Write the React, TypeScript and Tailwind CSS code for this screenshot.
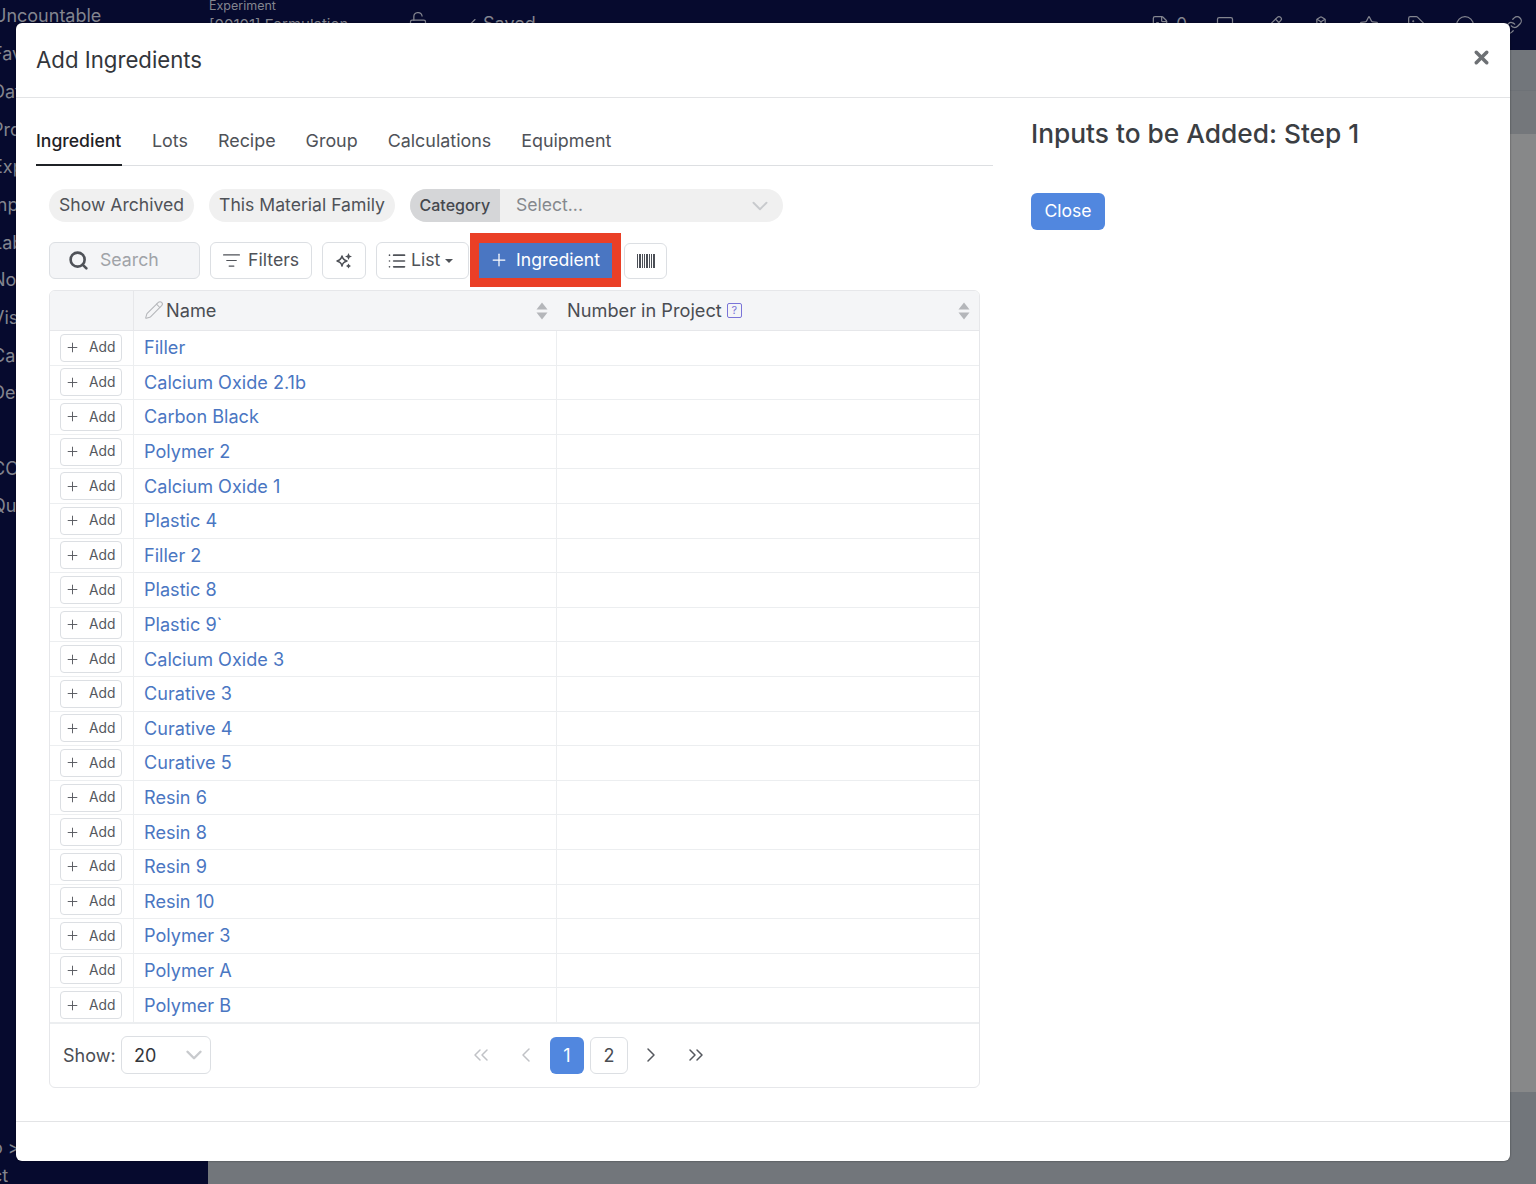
import { Boxes, Check, ChevronDown, ChevronLeft, ChevronRight, ChevronsLeft, ChevronsRight, Circle, FileText, Link, List, ListFilter, LockOpen, Pencil, Plus, Search, Square, Star, Tag, X } from 'lucide-react'

const sans = "font-['Inter',sans-serif]"

const sideItems = ['Fav', 'Dat', 'Pro', 'Exp', 'Inp', 'Lab', 'Not', 'Vis', 'Cal', 'Dev', '', 'CO', 'Qu']

const rows = [
  'Filler', 'Calcium Oxide 2.1b', 'Carbon Black', 'Polymer 2', 'Calcium Oxide 1', 'Plastic 4', 'Filler 2',
  'Plastic 8', 'Plastic 9`', 'Calcium Oxide 3', 'Curative 3', 'Curative 4', 'Curative 5', 'Resin 6',
  'Resin 8', 'Resin 9', 'Resin 10', 'Polymer 3', 'Polymer A', 'Polymer B',
]

const tabs = ['Lots', 'Recipe', 'Group', 'Calculations', 'Equipment']

function SortIcon() {
  return (
    <svg width="12" height="18" viewBox="0 0 12 18" fill="#b4b6ba">
      <path d="M6 0.5 L11.5 7.5 H0.5 Z" />
      <path d="M6 17.5 L11.5 10.5 H0.5 Z" />
    </svg>
  )
}

function Barcode() {
  return (
    <svg width="18" height="14" viewBox="0 0 18 14" fill="#4b4f56">
      <rect x="0" width="1" height="14" />
      <rect x="2" width="2" height="14" />
      <rect x="5" width="1" height="14" />
      <rect x="7" width="1" height="14" />
      <rect x="9" width="2" height="14" />
      <rect x="12" width="1" height="14" />
      <rect x="14" width="1" height="14" />
      <rect x="16" width="2" height="14" />
    </svg>
  )
}

function Stars() {
  return (
    <svg width="20" height="20" viewBox="0 0 20 20">
      <path d="M8 5 C8.6 8 9.8 9.2 13 10 C9.8 10.8 8.6 12 8 15 C7.4 12 6.2 10.8 3 10 C6.2 9.2 7.4 8 8 5 Z" fill="none" stroke="#4f5258" strokeWidth="1.5" strokeLinejoin="round" />
      <path d="M14.5 2 L15.6 4.4 L18 5.5 L15.6 6.6 L14.5 9 L13.4 6.6 L11 5.5 L13.4 4.4 Z" fill="#4f5258" />
      <path d="M14.5 12.5 L15.4 14.1 L17 15 L15.4 15.9 L14.5 17.5 L13.6 15.9 L12 15 L13.6 14.1 Z" fill="#4f5258" />
    </svg>
  )
}

function Row({ name }: { name: string }) {
  return (
    <div className="flex h-[34.6px] border-b border-[#eceef0]">
      <div className="flex w-[84px] shrink-0 items-center justify-center border-r border-[#eceef0] pr-[1px]">
        <div className="flex h-[28px] w-[62px] items-center gap-[9px] rounded-[4px] border border-[#dcdfe3] pl-[4px] text-[13.8px] text-[#55585e]">
          <Plus className="h-[15px] w-[15px]" strokeWidth={1.5} />
          <span>Add</span>
        </div>
      </div>
      <div className="flex w-[423px] shrink-0 items-center border-r border-[#eceef0] pl-[10px] text-[18.1px] text-[#4a76c2]">
        {name}
      </div>
      <div className="flex-1" />
    </div>
  )
}

export default function App() {
  return (
    <div className={`relative h-[1184px] w-[1536px] overflow-hidden bg-[#72767b] ${sans}`}>
      {/* page behind the dialog */}
      <div className="flex h-[50px] items-start bg-[#060a2e] text-[#83858f]">
        <div className="-ml-[7px] w-[216px] pt-[2px] text-[18px]">Uncountable</div>
        <div className="w-[199px] leading-none">
          <div className="text-[12.5px]">Experiment</div>
          <div className="pt-[4px] text-[15px]">[00101] Formulation</div>
        </div>
        <div className="flex items-start gap-[32px] pt-[11px]">
          <LockOpen className="h-[20px] w-[20px]" strokeWidth={1.5} />
          <div className="-mt-[1px] flex items-center gap-[5px] text-[18px]">
            <Check className="h-[18px] w-[18px]" strokeWidth={1.5} />
            <span>Saved</span>
          </div>
        </div>
        <div className="ml-auto flex items-center gap-[28px] pr-[13px] pt-[12px]">
          <div className="flex items-center gap-[6px]"><FileText className="h-[20px] w-[20px]" strokeWidth={1.5} /><span className="text-[17px]">0</span></div>
          <Square className="h-[20px] w-[20px]" strokeWidth={1.5} />
          <Pencil className="h-[20px] w-[20px]" strokeWidth={1.5} />
          <Boxes className="h-[20px] w-[20px]" strokeWidth={1.5} />
          <Star className="h-[20px] w-[20px]" strokeWidth={1.5} />
          <Tag className="h-[20px] w-[20px]" strokeWidth={1.5} />
          <Circle className="h-[20px] w-[20px]" strokeWidth={1.5} />
          <Link className="h-[20px] w-[20px]" strokeWidth={1.5} />
        </div>
      </div>
      <div className="flex h-[1134px]">
        <div className="flex w-[208px] shrink-0 flex-col justify-between bg-[#060a2e] text-[18px] text-[#83858f]">
          <div className="-ml-[8px] -mt-[15px] flex flex-col">
            {sideItems.map((s, i) => (
              <div key={i} className="flex h-[37.66px] items-center">{s}</div>
            ))}
          </div>
          <div className="-ml-[8px] flex flex-col">
            <div className="h-[28px]">o &gt;</div>
            <div className="h-[22px]">ct</div>
          </div>
        </div>
        <div className="flex flex-1 flex-col">
          <div className="h-[41px] border-b border-[#6e7277]" />
          <div className="h-[43px] bg-[#74777b]" />
          <div className="flex-1 bg-[#878889]" />
          <div className="h-[92px]" />
        </div>
      </div>

      {/* dialog */}
      <div className="absolute left-[16px] top-[23px] flex h-[1138px] w-[1494px] flex-col rounded-[6px] bg-white shadow-[0_0_2px_rgba(0,0,0,0.5)]">
        <div className="relative flex h-[75px] shrink-0 items-center border-b border-[#e3e4e6] pl-[20px]">
          <h2 className="text-[22.2px] text-[#33363b]">Add Ingredients</h2>
          <X className="absolute right-[18px] top-[24px] h-[21px] w-[21px] text-[#6d7074]" strokeWidth={4} />
        </div>

        <div className="flex flex-1">
          <div className="w-[1015px] shrink-0 pl-[20px] pr-[38px]">
            {/* tabs */}
            <div className="flex h-[68px] items-end gap-[30px] border-b border-[#dddfe2] text-[17.9px] text-[#4f5258]">
              <div className="-mb-px flex h-[38px] w-[86px] items-start whitespace-nowrap border-b-2 border-[#1f2226] text-[17.6px] font-medium text-[#1f2226]">Ingredient</div>
              {tabs.map(t => (
                <div key={t} className="flex h-[37px] items-start">{t}</div>
              ))}
            </div>

            <div className="px-[13px]">
              {/* quick filters */}
              <div className="mt-[23px] flex h-[33px] items-center gap-[15px] text-[17.6px] text-[#4f5258]">
                <div className="flex h-full items-center rounded-full bg-[#f0f0f0] px-[10px]">Show Archived</div>
                <div className="flex h-full items-center rounded-full bg-[#f0f0f0] px-[10px]">This Material Family</div>
                <div className="flex h-full w-[373px] overflow-hidden rounded-full bg-[#f0f0f0]">
                  <div className="flex w-[90px] items-center justify-center bg-[#d5d6d8] pb-[2px] text-[16px] font-medium text-[#45484e]">Category</div>
                  <div className="flex flex-1 items-center justify-between pl-[16px] pr-[10px] text-[#85888d]">
                    <span>Select...</span>
                    <ChevronDown className="h-[26px] w-[26px] text-[#c8cacd]" strokeWidth={1.75} />
                  </div>
                </div>
              </div>

              {/* toolbar */}
              <div className="mt-[20px] flex h-[37px] items-center text-[17.7px] text-[#4f5258]">
                <div className="flex h-[37px] w-[151px] items-center gap-[11px] rounded-[6px] border border-[#dcdfe3] bg-[#f4f5f7] pl-[18px] text-[#a0a3a8]">
                  <Search className="h-[21px] w-[21px] text-[#4f5258]" strokeWidth={3} />
                  <span>Search</span>
                </div>
                <div className="ml-[10px] flex h-[37px] w-[102px] items-center gap-[7px] rounded-[6px] border border-[#dcdfe3] pl-[11px]">
                  <ListFilter className="h-[19px] w-[19px]" strokeWidth={1.5} />
                  <span>Filters</span>
                </div>
                <div className="ml-[10px] flex h-[37px] w-[44px] items-center justify-center rounded-[6px] border border-[#dcdfe3]">
                  <Stars />
                </div>
                <div className="ml-[10px] flex h-[37px] w-[93px] items-center gap-[4px] rounded-[6px] border border-[#dcdfe3] pl-[10px]">
                  <List className="h-[20px] w-[20px]" strokeWidth={2} />
                  <span>List</span>
                  <span className="ml-[1px] h-0 w-0 border-x-[4px] border-t-[4px] border-x-transparent border-t-[#4f5258]" />
                </div>
                <div className="ml-[1px] -mt-[1px] flex h-[54px] w-[151px] items-center justify-center bg-[#ea3f26]">
                  <div className="flex h-[35px] w-[133px] items-center justify-center gap-[7px] bg-[#4a76c2] pr-[2px] text-[17.6px] text-white">
                    <Plus className="h-[20px] w-[20px]" strokeWidth={1.5} />
                    <span>Ingredient</span>
                  </div>
                </div>
                <div className="ml-[3px] flex h-[36px] w-[43px] items-center justify-center rounded-[6px] border border-[#dcdfe3]">
                  <Barcode />
                </div>
              </div>

              {/* table */}
              <div className="mt-[11px] w-[931px] overflow-hidden rounded-[6px] border border-[#e6e7ea]">
                <div className="flex h-[40px] border-b border-[#e6e7ea] bg-[#f4f5f7] text-[18.2px] text-[#4a4d53]">
                  <div className="w-[84px] shrink-0 border-r border-[#e6e7ea]" />
                  <div className="flex w-[423px] shrink-0 items-center justify-between pl-[10px] pr-[9px]">
                    <div className="flex items-center gap-[2px]">
                      <Pencil className="h-[20px] w-[20px] text-[#b4b6ba]" strokeWidth={1.25} />
                      <span>Name</span>
                    </div>
                    <SortIcon />
                  </div>
                  <div className="flex flex-1 items-center justify-between pl-[10px] pr-[9px]">
                    <div className="flex items-center gap-[5px]">
                      <span>Number in Project</span>
                      <span className="flex h-[15px] w-[15px] items-center justify-center rounded-[2px] border border-[#7a74d8] text-[11px] leading-none text-[#7a74d8]">?</span>
                    </div>
                    <SortIcon />
                  </div>
                </div>
                {rows.map(r => (
                  <Row key={r} name={r} />
                ))}
                <div className="flex h-[64px] items-center border-t border-[#eceef0] pl-[13px] text-[18px] text-[#4a4d53]">
                  <span className="w-[53px] whitespace-nowrap">Show:</span>
                  <div className="ml-[5px] flex h-[38px] w-[90px] items-center justify-between rounded-[6px] border border-[#dcdfe3] pl-[12px] pr-[3px] text-[#33363b]">
                    <span>20</span>
                    <ChevronDown className="h-[26px] w-[26px] text-[#c8cacd]" strokeWidth={2.25} />
                  </div>
                  <div className="ml-[258px] flex items-center">
                    <ChevronsLeft className="h-[24px] w-[24px] text-[#c0c2c6]" strokeWidth={1.5} />
                    <ChevronLeft className="ml-[21px] h-[24px] w-[24px] text-[#c0c2c6]" strokeWidth={1.5} />
                    <div className="ml-[12px] flex h-[37px] w-[34px] items-center justify-center rounded-[6px] bg-[#5187df] text-white">1</div>
                    <div className="ml-[6px] flex h-[37px] w-[38px] items-center justify-center rounded-[6px] border border-[#dcdfe3] text-[#4a4d53]">2</div>
                    <ChevronRight className="ml-[11px] h-[24px] w-[24px] text-[#55585e]" strokeWidth={1.5} />
                    <ChevronsRight className="ml-[21px] h-[24px] w-[24px] text-[#55585e]" strokeWidth={1.5} />
                  </div>
                </div>
              </div>
            </div>
          </div>

          <div className="pt-[18px]">
            <h3 className="text-[26.3px] font-medium leading-[36px] text-[#3b3e43]">Inputs to be Added: Step 1</h3>
            <button className="mt-[41px] h-[37px] w-[74px] rounded-[6px] bg-[#5187df] text-[17.6px] text-white">Close</button>
          </div>
        </div>

        <div className="h-[40px] shrink-0 border-t border-[#e3e4e6]" />
      </div>
    </div>
  )
}
